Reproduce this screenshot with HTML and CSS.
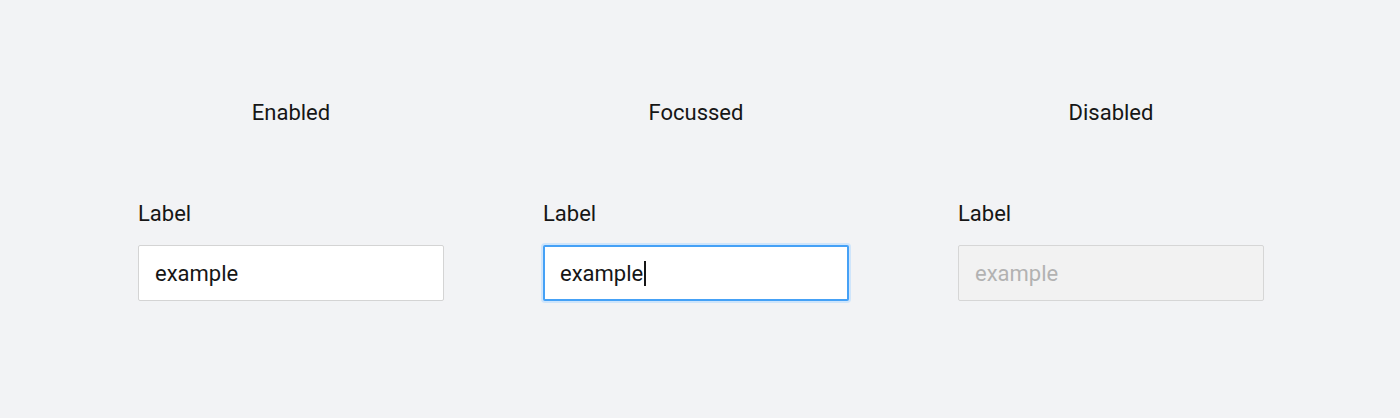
FILE: index.html
```html
<html>
  <head>
    <title>Text field states</title>
    <meta name="viewport" content="width=device-width, initial-scale=1">
    <link rel="stylesheet" href="styles.css">
  </head>
  <body>
    <div class="states">
      <div class="state">
        <h2 class="state-title">Enabled</h2>
        <label class="field-label">Label</label>
        <div class="field">example</div>
      </div>
      <div class="state">
        <h2 class="state-title">Focussed</h2>
        <label class="field-label">Label</label>
        <div class="field field-focus">example<span class="caret"></span></div>
      </div>
      <div class="state state-last">
        <h2 class="state-title">Disabled</h2>
        <label class="field-label">Label</label>
        <div class="field field-disabled">example</div>
      </div>
    </div>
  </body>
</html>
```
FILE: styles.css
```css
body {
  margin: 0;
  background-color: #f2f3f5;
  font-family: Roboto, "Liberation Sans", sans-serif;
  color: #161616;
}

.states {
  display: flex;
  gap: 99px;
  padding: 100px 0 0 138px;
}

.state {
  width: 306px;
  display: flex;
  flex-direction: column;
}

.state-last {
  margin-left: 10px;
}

.state-title {
  margin: 0 0 75px;
  font-size: 22px;
  font-weight: 400;
  line-height: 26px;
  text-align: center;
}

.field-label {
  display: block;
  font-size: 22px;
  line-height: 26px;
  margin-bottom: 18px;
}

/* input box */
.field {
  box-sizing: border-box;
  height: 56px;
  display: flex;
  align-items: center;
  padding: 0 16px;
  background: #fff;
  border: 1px solid #d4d4d4;
  border-radius: 2px;
  font-size: 22px;
}

.field-focus {
  padding: 0 15px;
  border: 2px solid #45a1f6;
  box-shadow: 0 0 0 2px #cfe5fb;
}

.caret {
  display: inline-block;
  width: 2px;
  height: 25px;
  margin-left: 1px;
  background: #161616;
}

.field-disabled {
  background: #f2f2f2;
  border-color: #d6d6d6;
  color: #b2b2b2;
}
```
